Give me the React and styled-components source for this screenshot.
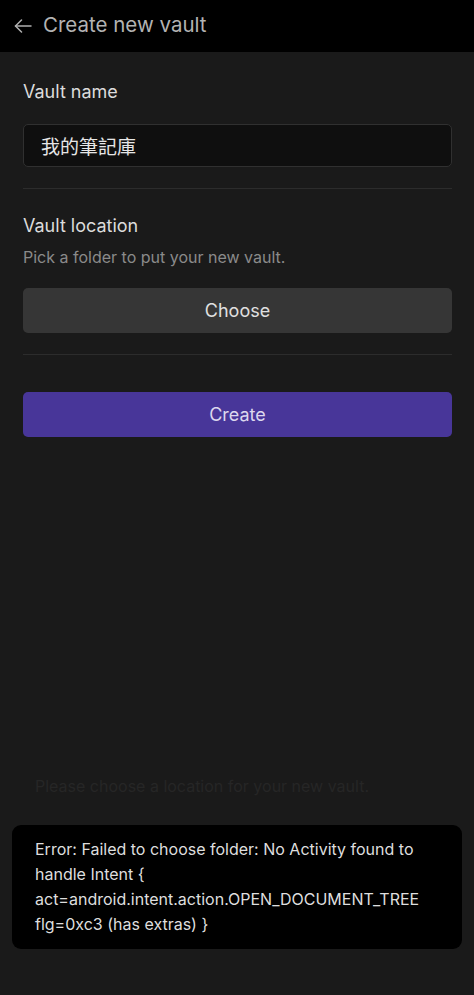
import React from "react";
import styled, { createGlobalStyle } from "styled-components";

const Global = createGlobalStyle`
  html, body { margin: 0; padding: 0; background: #1a1a1a; }
  body { font-family: Inter, "Noto Sans", "Noto Sans CJK TC", sans-serif; }
  * { box-sizing: border-box; }
`;

const Page = styled.div`
  position: relative;
  width: 474px;
  height: 995px;
  background: #1a1a1a;
  overflow: hidden;
`;

const Header = styled.header`
  height: 52px;
  background: #000;
  display: flex;
  align-items: center;
  gap: 11px;
  padding-left: 14px;
  color: #b0b0b0;
`;

const Title = styled.h1`
  margin: 0;
  font-size: 20.5px;
  font-weight: 400;
  color: #b3b3b3;
  line-height: 24px;
  padding-bottom: 3px;
`;

const Main = styled.main`
  padding: 28px 22px 0 23px;
  display: flex;
  flex-direction: column;
`;

const Label = styled.div`
  font-size: 18px;
  line-height: 24px;
  color: #dcdcdc;
  margin-top: ${(p) => p.$top || 0}px;
`;

const Desc = styled.div`
  font-size: 16px;
  line-height: 20px;
  color: #8a8a8a;
  margin-top: 9px;
`;

const Input = styled.div`
  margin-top: 20px;
  height: 43px;
  background: #0f0f0f;
  border: 1px solid #303030;
  border-radius: 5px;
  display: flex;
  align-items: center;
  padding-left: 17px;
  font-family: "Noto Sans CJK TC", sans-serif;
  font-size: 19px;
  color: #e6e6e6;
`;

const Divider = styled.hr`
  margin: ${(p) => p.$top}px 0 0;
  border: 0;
  height: 1px;
  background: #2c2c2c;
`;

const Button = styled.button`
  margin-top: ${(p) => p.$top}px;
  height: 45px;
  width: 100%;
  border: 0;
  border-radius: 5px;
  background: ${(p) => (p.$primary ? "#483699" : "#363636")};
  color: ${(p) => (p.$primary ? "#dcd8ee" : "#e0e0e0")};
  font-family: Inter, sans-serif;
  font-size: 18px;
  padding: 0;
`;

const ToastStack = styled.div`
  position: absolute;
  left: 12px;
  right: 12px;
  bottom: 46px;
  display: flex;
  flex-direction: column;
  gap: 14px;
`;

const Toast = styled.div`
  background: ${(p) => (p.$fading ? "transparent" : "#000")};
  color: ${(p) => (p.$fading ? "#262626" : "#dedede")};
  border-radius: 9px;
  padding: 12px 23px;
  font-size: 16px;
  line-height: 25px;
`;

const BackArrow = () => (
  <svg width="18" height="14" viewBox="0 0 18 14" fill="none" stroke="currentColor" strokeWidth="1.5" strokeLinecap="round" strokeLinejoin="round">
    <path d="M17 7H1.5" />
    <path d="M7.5 1L1.5 7l6 6" />
  </svg>
);

export default function App() {
  return (
    <Page>
      <Global />
      <Header>
        <BackArrow />
        <Title>Create new vault</Title>
      </Header>
      <Main>
        <Label>Vault name</Label>
        <Input>我的筆記庫</Input>
        <Divider $top={21} />
        <Label $top={25}>Vault location</Label>
        <Desc>Pick a folder to put your new vault.</Desc>
        <Button $top={21}>Choose</Button>
        <Divider $top={21} />
        <Button $primary $top={37}>Create</Button>
      </Main>
      <ToastStack>
        <Toast $fading>Please choose a location for your new vault.</Toast>
        <Toast>
          Error: Failed to choose folder: No Activity found to handle Intent {"{"} act=android.intent.action.OPEN_DOCUMENT_TREE flg=0xc3 (has extras) {"}"}
        </Toast>
      </ToastStack>
    </Page>
  );
}
